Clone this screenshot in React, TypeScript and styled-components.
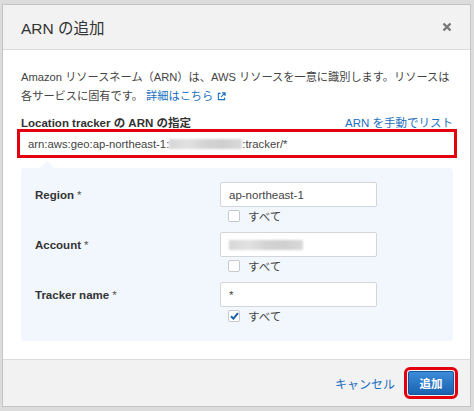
import React from 'react'
import styled, { createGlobalStyle } from 'styled-components'

const GlobalStyle = createGlobalStyle`
    html, body {
        margin: 0;
        padding: 0;
        background: #dcdcdc;
    }
    body {
        font-family: "Liberation Sans", "Noto Sans CJK JP", sans-serif;
        font-size: 11.5px;
        color: #444;
    }
`

const Frame = styled.div`
    width: 474px;
    height: 411px;
    padding: 4px 3px 4px 2px;
    box-sizing: border-box;
`

const Dialog = styled.div`
    height: 100%;
    box-sizing: border-box;
    border: 1px solid #c4c4c4;
    background: #fff;
    display: flex;
    flex-direction: column;
`

const Header = styled.div`
    height: 44px;
    flex: none;
    display: flex;
    align-items: center;
    justify-content: space-between;
    padding: 0 18px 0 18px;
    background: #f2f2f2;
    border-bottom: 1px solid #dcdcdc;
`

const Title = styled.h2`
    margin: 0;
    font-size: 15.5px;
    font-weight: normal;
    color: #333;
`

const Close = styled.button`
    border: 0;
    background: none;
    padding: 0;
    width: 10px;
    height: 10px;
    display: flex;
    cursor: pointer;
`

const Body = styled.div`
    flex: 1;
    padding: 18px 13px 0 14px;
`

const Description = styled.p`
    margin: 0 0 8px 4px;
    line-height: 19px;
    font-size: 11.2px;
    white-space: nowrap;
    color: #444;
`

const Link = styled.a`
    color: #1a6fc0;
    text-decoration: none;
    cursor: pointer;
`

const ExtIcon = styled.svg`
    width: 9px;
    height: 9px;
    margin-left: 4px;
    vertical-align: -1px;
`

const LabelRow = styled.div`
    display: flex;
    justify-content: space-between;
    align-items: center;
    height: 15px;
    margin: 0 4px 0 4px;
`

const FieldLabel = styled.span`
    font-weight: bold;
    color: #333;
`

const ManualLink = styled(Link)`
    font-size: 11.5px;
`

const Highlight = styled.div`
    height: 29px;
    box-sizing: border-box;
    border: 3px solid #e3000f;
    background: #fff;
    display: flex;
    align-items: center;
    padding-left: 8px;
    color: #444;
    font-size: 11.3px;
`

const Masked = styled.span<{ $width: number }>`
    display: inline-block;
    width: ${p => p.$width}px;
    height: 10px;
    background: linear-gradient(90deg, #d6d6d6 0%, #e2e2e2 25%, #d3d3d3 50%, #cfcfcf 75%, #dadada 100%);
    filter: blur(1px);
`

const Panel = styled.div`
    position: relative;
    margin: 10px 4px 0 4px;
    padding: 14px 0 19px 14px;
    background: #f1f7fd;
    border-radius: 3px;
    display: grid;
    grid-template-columns: 185px 157px;
    row-gap: 10px;

    &::before {
        content: '';
        position: absolute;
        top: -7px;
        left: 19px;
        border-left: 7px solid transparent;
        border-right: 7px solid transparent;
        border-bottom: 7px solid #f1f7fd;
    }
`

const RowLabel = styled.div`
    height: 25px;
    display: flex;
    align-items: center;
    font-weight: bold;
    color: #333;
`

const Required = styled.span`
    font-weight: normal;
    color: #555;
    margin-left: 3px;
`

const Field = styled.div`
    display: flex;
    flex-direction: column;
`

const Input = styled.div`
    height: 25px;
    box-sizing: border-box;
    border: 1px solid #d2d6d9;
    border-radius: 2px;
    background: #fff;
    display: flex;
    align-items: center;
    padding-left: 8px;
    color: #444;
`

const Check = styled.label`
    display: flex;
    align-items: center;
    gap: 8px;
    margin: 3px 0 0 8px;
    height: 12px;
    color: #444;
`

const Box = styled.span`
    width: 12px;
    height: 12px;
    box-sizing: border-box;
    border: 1px solid #c6c9cc;
    border-radius: 2px;
    background: #fff;
    display: flex;
    align-items: center;
    justify-content: center;
`

const Footer = styled.div`
    height: 46px;
    flex: none;
    background: #f2f2f2;
    border-top: 1px solid #dcdcdc;
    display: flex;
    align-items: center;
    justify-content: flex-end;
    gap: 13px;
    padding-right: 16px;
`

const Cancel = styled(Link)`
    font-size: 12px;
`

const Primary = styled.button`
    width: 46px;
    height: 24px;
    border: 1px solid #14579c;
    border-radius: 2px;
    background: linear-gradient(#3b8bd8, #1b63b1);
    color: #fff;
    font-family: inherit;
    font-weight: bold;
    font-size: 11.5px;
    outline: 3px solid #e3000f;
    outline-offset: 1px;
    cursor: pointer;
`

const Checkbox = ({ checked }: { checked?: boolean }) => (
    <Check>
        <Box>
            {checked && (
                <svg width="9" height="8" viewBox="0 0 9 8">
                    <path d="M1 4.2 L3.4 6.6 L8 1.2" fill="none" stroke="#1e5ea8" strokeWidth="2" />
                </svg>
            )}
        </Box>
        すべて
    </Check>
)

export default function App() {
    return (
        <Frame>
            <GlobalStyle />
            <Dialog>
                <Header>
                    <Title>ARN の追加</Title>
                    <Close aria-label="close">
                        <svg width="10" height="10" viewBox="0 0 10 10">
                            <path d="M1.5 1.5 L8.5 8.5 M8.5 1.5 L1.5 8.5" stroke="#777" strokeWidth="2.4" />
                        </svg>
                    </Close>
                </Header>
                <Body>
                    <Description>
                        Amazon リソースネーム（ARN）は、AWS リソースを一意に識別します。リソースは
                        <br />
                        各サービスに固有です。 <Link>詳細はこちら</Link>
                        <ExtIcon viewBox="0 0 10 10">
                            <path d="M4 1.5 H1.5 V8.5 H8.5 V6" fill="none" stroke="#1a6fc0" strokeWidth="1.2" />
                            <path d="M5.5 1 H9 V4.5 M9 1 L4.5 5.5" fill="none" stroke="#1a6fc0" strokeWidth="1.2" />
                        </ExtIcon>
                    </Description>
                    <LabelRow>
                        <FieldLabel>Location tracker の ARN の指定</FieldLabel>
                        <ManualLink>ARN を手動でリスト</ManualLink>
                    </LabelRow>
                    <Highlight>
                        arn:aws:geo:ap-northeast-1:<Masked $width={73} />:tracker/*
                    </Highlight>
                    <Panel>
                        <RowLabel>
                            Region<Required>*</Required>
                        </RowLabel>
                        <Field>
                            <Input>ap-northeast-1</Input>
                            <Checkbox />
                        </Field>
                        <RowLabel>
                            Account<Required>*</Required>
                        </RowLabel>
                        <Field>
                            <Input>
                                <Masked $width={74} />
                            </Input>
                            <Checkbox />
                        </Field>
                        <RowLabel>
                            Tracker name<Required>*</Required>
                        </RowLabel>
                        <Field>
                            <Input>*</Input>
                            <Checkbox checked />
                        </Field>
                    </Panel>
                </Body>
                <Footer>
                    <Cancel>キャンセル</Cancel>
                    <Primary>追加</Primary>
                </Footer>
            </Dialog>
        </Frame>
    )
}
